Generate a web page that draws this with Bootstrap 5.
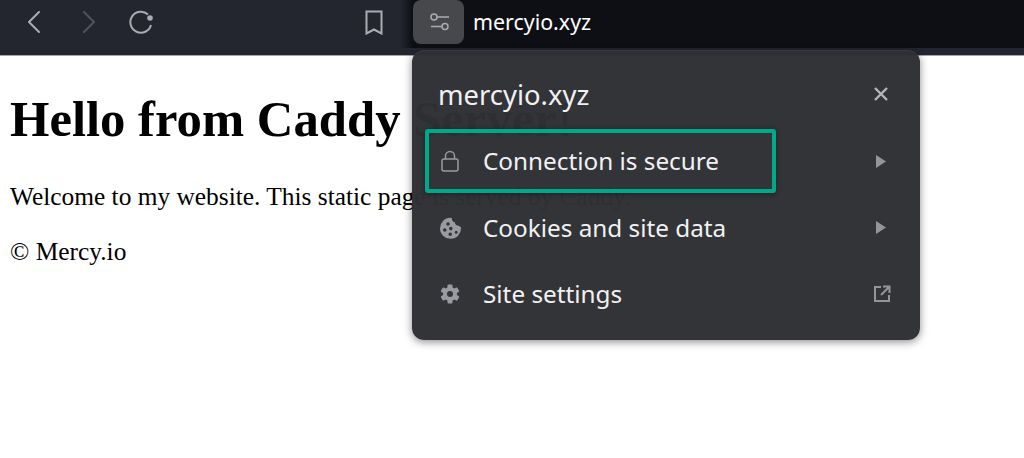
<!DOCTYPE html>
<html lang="en">
<head>
  <meta charset="UTF-8" />
  <meta name="viewport" content="width=device-width, initial-scale=1" />
  <title>Hello from Caddy</title>
  <link href="https://cdn.jsdelivr.net/npm/bootstrap@5.3.3/dist/css/bootstrap.min.css" rel="stylesheet" />
  <style>
    html, body { height: 100%; overflow: hidden; }
    body { background: #fff; color: #000; font-family: "Liberation Serif", serif; }

    .toolbar { height: 55px; background: #23262e; box-shadow: 0 1px 0 #a4a6aa; }
    .toolbar-left { width: 400px; height: 44px; padding-left: 28px; }
    .tb-btn { width: 16px; margin-right: 39px; color: #a9acb2; line-height: 0; }
    .tb-btn.off { color: #50535a; margin-right: 30px; }
    .tb-reload { width: 26px; margin-right: 0; }
    .tb-mark { width: 18px; margin-left: auto; margin-right: 17px; }
    .url-field { height: 48px; background: linear-gradient(90deg, #23262e, #0e0f14 13px); padding-left: 13px; }
    .site-btn { width: 51px; height: 44px; margin-right: 9px; border-radius: 8px; background: #47484c; color: #a9acb2; }
    .url-text { color: #fff; font: 21.4px/44px "Noto Sans", sans-serif; }

    .page-body { padding: 0 10px; }
    .page-body h1 { font: 700 50.7px/1.15 "Liberation Serif", serif; margin: 35px 0 0; }
    .page-body p { font-size: 25.4px; line-height: 1.15; margin: 0; }
    .intro { margin-top: 34px !important; }
    .foot { margin-top: 25px !important; }

    .site-popup { position: absolute; left: 412px; top: 50px; width: 508px; height: 290px; border-radius: 12px; background: rgba(47, 48, 52, .98); color: #f1f1f2; box-shadow: 0 2px 8px rgba(0, 0, 0, .45), inset 0 1px rgba(255, 255, 255, .06); font-family: "Noto Sans", sans-serif; }
    .popup-head { height: 78px; padding: 12px 31px 0 26px; }
    .popup-title { font-size: 27.4px; }
    .popup-row { height: 66.5px; padding: 0 29px 0 28px; font-size: 24.3px; }
    .row-ico { width: 20px; margin-right: 23px; color: #9a9ba0; line-height: 0; }
    .row-end { margin-left: auto; color: #94959a; line-height: 0; }
    .row-close { margin-bottom: 2px; }
    .row-arrow { margin-right: 5px; }
    .mark-box { position: absolute; left: 13px; top: 79px; width: 351px; height: 64px; border: 4px solid #00a98a; border-radius: 3px; box-shadow: 0 1px 5px rgba(0, 0, 0, .4); }
  </style>
</head>
<body>
  <div class="toolbar d-flex align-items-start">
    <div class="toolbar-left d-flex align-items-center">
      <div class="tb-btn"><svg width="12" height="24" viewBox="0 0 12 24" fill="none" stroke="currentColor" stroke-width="2" stroke-linecap="round" stroke-linejoin="round"><path d="M11 2 1 12l10 10"/></svg></div>
      <div class="tb-btn off"><svg width="12" height="24" viewBox="0 0 12 24" fill="none" stroke="currentColor" stroke-width="2" stroke-linecap="round" stroke-linejoin="round"><path d="m1 2 10 10L1 22"/></svg></div>
      <div class="tb-btn tb-reload"><svg width="26" height="26" viewBox="0 0 26 26" fill="none" stroke="currentColor" stroke-width="2"><path d="M22 16a10.500 10.500 0 1 1-3-10.500"/><circle cx="21" cy="9" r="2.800" fill="currentColor" stroke="none"/></svg></div>
      <div class="tb-btn tb-mark"><svg width="18" height="25" viewBox="0 0 18 25" fill="none" stroke="currentColor" stroke-width="2"><path d="M1.500 1.500h15v22L9 19.500 1.500 23.500z"/></svg></div>
    </div>
    <div class="url-field d-flex align-items-start flex-grow-1">
      <div class="site-btn d-flex align-items-center justify-content-center">
        <svg width="20" height="18" viewBox="0 0 20 18" fill="none" stroke="currentColor" stroke-width="1.500"><circle cx="5" cy="4" r="3"/><path d="M8 4h12M2 13.500h11"/><circle cx="16" cy="13.500" r="3"/></svg>
      </div>
      <span class="url-text">mercyio.xyz</span>
    </div>
  </div>

  <main class="page-body">
    <h1>Hello from Caddy Server!</h1>
    <p class="intro">Welcome to my website. This static page is served by Caddy.</p>
    <p class="foot">© Mercy.io</p>
  </main>

  <div class="site-popup">
    <div class="popup-head d-flex align-items-center">
      <span class="popup-title">mercyio.xyz</span>
      <span class="row-end row-close"><svg width="16" height="16" viewBox="0 0 16 16" fill="none" stroke="#b5b6b9" stroke-width="2.400"><path d="m2 2 12 12M14 2 2 14"/></svg></span>
    </div>
    <div class="popup-row d-flex align-items-center">
      <span class="row-ico"><svg width="20" height="22" viewBox="0 0 20 22" fill="none" stroke="currentColor" stroke-width="1.500"><rect x="2" y="9" width="16" height="12" rx="2"/><path d="M5.500 9V6a4.500 4.500 0 0 1 9 0v3"/></svg></span>
      <span>Connection is secure</span>
      <span class="row-end row-arrow"><svg width="10" height="13" viewBox="0 0 10 13"><path d="M0 0l10 6.500L0 13z" fill="currentColor"/></svg></span>
    </div>
    <div class="popup-row d-flex align-items-center">
      <span class="row-ico"><svg width="22" height="22" viewBox="0 0 22 22"><path fill="currentColor" fill-rule="evenodd" d="M10.500 .8c.9 0 1.400.5 1.500 1.400.2 1.700 1.200 2.800 2.800 3 .2 1.800 1.300 3 3 3.300.8.200 1.200.7 2 1 .6.200 1.200.4 1.200 1.300A10.500 10.500 0 1 1 10.500 .8zM8 5.200a1.800 1.800 0 1 0 0 3.600 1.800 1.800 0 0 0 0-3.600zm-3.200 6a1.800 1.800 0 1 0 0 3.600 1.800 1.800 0 0 0 0-3.600zm6-1.400a1.800 1.800 0 1 0 0 3.600 1.800 1.800 0 0 0 0-3.600zm-.6 5.600a1.800 1.800 0 1 0 0 3.600 1.800 1.800 0 0 0 0-3.600zm6-1.600a1.500 1.500 0 1 0 0 3 1.500 1.500 0 0 0 0-3z"/></svg></span>
      <span>Cookies and site data</span>
      <span class="row-end row-arrow"><svg width="10" height="13" viewBox="0 0 10 13"><path d="M0 0l10 6.500L0 13z" fill="currentColor"/></svg></span>
    </div>
    <div class="popup-row d-flex align-items-center">
      <span class="row-ico"><svg width="20" height="20" viewBox="0 0 20 20"><g fill="currentColor"><rect x="7.500" y=".5" width="5" height="19" rx="1"/><rect x="7.500" y=".5" width="5" height="19" rx="1" transform="rotate(60 10 10)"/><rect x="7.500" y=".5" width="5" height="19" rx="1" transform="rotate(120 10 10)"/><circle cx="10" cy="10" r="7"/></g><circle cx="10" cy="10" r="3" fill="#333438"/></svg></span>
      <span>Site settings</span>
      <span class="row-end"><svg width="18" height="18" viewBox="0 0 18 18" fill="none" stroke="currentColor" stroke-width="2"><path d="M8 2H2v14h14v-6M10 1.500h6.500V8M16 2 8 10"/></svg></span>
    </div>
    <div class="mark-box"></div>
  </div>

  <script src="https://cdn.jsdelivr.net/npm/bootstrap@5.3.3/dist/js/bootstrap.bundle.min.js"></script>
</body>
</html>
